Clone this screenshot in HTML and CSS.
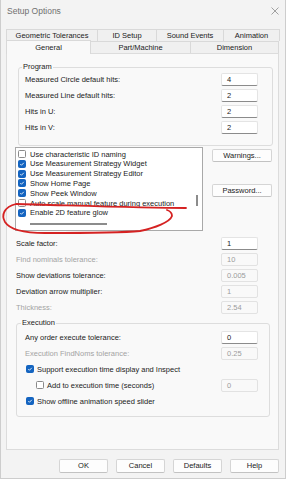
FILE: index.html
```html
<!DOCTYPE html>
<html lang="en">
<head>
    <meta charset="UTF-8">
    <meta name="viewport" content="width=device-width, initial-scale=1.0">
    <title>Setup Options</title>
    <link rel="stylesheet" href="styles.css">
</head>
<body>

<div class="window">
    <div class="titlebar">
        <span class="title">Setup Options</span>
        <svg class="close" width="8" height="8" viewBox="0 0 8 8"><path d="M0.5 0.5L7.5 7.5M7.5 0.5L0.5 7.5"/></svg>
    </div>

    <div class="tabs">
        <div class="tab-row">
            <div class="tab t-geo">Geometric Tolerances</div>
            <div class="tab t-id">ID Setup</div>
            <div class="tab t-sound">Sound Events</div>
            <div class="tab t-anim">Animation</div>
        </div>
        <div class="tab-row">
            <div class="tab t-general active">General</div>
            <div class="tab t-part">Part/Machine</div>
            <div class="tab t-dim">Dimension</div>
        </div>
    </div>

    <div class="panel">
        <fieldset class="group program">
            <legend>Program</legend>
            <div class="row"><span class="label">Measured Circle default hits:</span><span class="input">4</span></div>
            <div class="row"><span class="label">Measured Line default hits:</span><span class="input">2</span></div>
            <div class="row"><span class="label">Hits in U:</span><span class="input">2</span></div>
            <div class="row"><span class="label">Hits in V:</span><span class="input">2</span></div>
        </fieldset>

        <div class="options">
            <div class="listbox">
                <div class="item"><span class="check"></span>Use characteristic ID naming</div>
                <div class="item"><span class="check on"><svg viewBox="0 0 8 8"><path d="M1.7 4.1L3.3 5.7L6.4 2.4"/></svg></span>Use Measurement Strategy Widget</div>
                <div class="item"><span class="check on"><svg viewBox="0 0 8 8"><path d="M1.7 4.1L3.3 5.7L6.4 2.4"/></svg></span>Use Measurement Strategy Editor</div>
                <div class="item"><span class="check on"><svg viewBox="0 0 8 8"><path d="M1.7 4.1L3.3 5.7L6.4 2.4"/></svg></span>Show Home Page</div>
                <div class="item"><span class="check on"><svg viewBox="0 0 8 8"><path d="M1.7 4.1L3.3 5.7L6.4 2.4"/></svg></span>Show Peek Window</div>
                <div class="item"><span class="check"></span>Auto scale manual feature during execution</div>
                <div class="item"><span class="check on"><svg viewBox="0 0 8 8"><path d="M1.7 4.1L3.3 5.7L6.4 2.4"/></svg></span>Enable 2D feature glow</div>
                <div class="hthumb"></div>
                <div class="vthumb"></div>
            </div>
            <div class="side-buttons">
                <div class="button">Warnings...</div>
                <div class="button">Password...</div>
            </div>
            <!-- red hand-drawn markup over the list -->
            <svg class="markup" width="200" height="40" viewBox="0 200 200 40">
                <path d="M186 209C140 209 60 206 16 205C4 208 1 216 5 223C10 231 25 234 45 234C80 234 120 234 140 232C155 229 170 223 172 217C172 214 170 212 167 211"/>
            </svg>
        </div>

        <div class="fields">
            <div class="row"><span class="label">Scale factor:</span><span class="input">1</span></div>
            <div class="row"><span class="label disabled">Find nominals tolerance:</span><span class="input disabled">10</span></div>
            <div class="row"><span class="label">Show deviations tolerance:</span><span class="input disabled">0.005</span></div>
            <div class="row"><span class="label">Deviation arrow multiplier:</span><span class="input disabled">1</span></div>
            <div class="row"><span class="label disabled">Thickness:</span><span class="input disabled">2.54</span></div>
        </div>

        <fieldset class="group execution">
            <legend>Execution</legend>
            <div class="row"><span class="label">Any order execute tolerance:</span><span class="input">0</span></div>
            <div class="row"><span class="label disabled">Execution FindNoms tolerance:</span><span class="input disabled">0.25</span></div>
            <div class="row"><span class="check on"><svg viewBox="0 0 8 8"><path d="M1.7 4.1L3.3 5.7L6.4 2.4"/></svg></span><span class="label">Support execution time display and Inspect</span></div>
            <div class="row indent"><span class="check"></span><span class="label">Add to execution time (seconds)</span><span class="input disabled">0</span></div>
            <div class="row"><span class="check on"><svg viewBox="0 0 8 8"><path d="M1.7 4.1L3.3 5.7L6.4 2.4"/></svg></span><span class="label">Show offline animation speed slider</span></div>
        </fieldset>
    </div>

    <div class="footer">
        <div class="button">OK</div>
        <div class="button">Cancel</div>
        <div class="button">Defaults</div>
        <div class="button">Help</div>
    </div>
</div>

</body>
</html>
```

FILE: styles.css
```css
* {
    box-sizing: border-box;
}
body {
    margin: 0;
    font-family: "Liberation Sans", Arial, sans-serif;
    font-size: 7.5px;
    color: #1b1b1b;
    background-color: #ffffff;
}
.window {
    width: 286px;
    height: 479px;
    background-color: #f3f3f3;
    border: 1px solid #cdcdcd;
    border-top: none;
    display: flex;
    flex-direction: column;
}

/* title bar */
.titlebar {
    height: 28px;
    flex: none;
    display: flex;
    justify-content: space-between;
    align-items: flex-start;
    padding: 5px 6px 0 6px;
}
.title {
    font-size: 8.5px;
    line-height: 12px;
    color: #707070;
}
.close {
    margin-top: 2px;
}
.close path {
    stroke: #8a8a8a;
    stroke-width: 0.8;
    fill: none;
}

/* tabs */
.tabs {
    height: 25px;
    flex: none;
    padding: 1px 6px 0 5px;
}
.tab-row {
    display: flex;
    height: 12px;
}
.tab {
    border: 1px solid #d9d9d9;
    border-bottom: none;
    margin-right: -1px;
    background-color: #f0f0f0;
    text-align: center;
    line-height: 11px;
    white-space: nowrap;
}
.t-geo { width: 92px; }
.t-id { width: 60px; }
.t-sound { width: 68px; }
.t-anim { width: 57px; }
.t-general { width: 85px; }
.t-part { width: 101px; }
.t-dim { width: 89px; }
.tab.active {
    background-color: #f9f9f9;
    height: 14px;
    margin-top: -1px;
    line-height: 13px;
    position: relative;
    z-index: 1;
}

/* page body */
.panel {
    height: 397px;
    flex: none;
    margin: 0 6px 0 5px;
    background-color: #f9f9f9;
    border: 1px solid #dcdcdc;
}
.group {
    margin: 0;
    border: 1px solid #dddddd;
    border-radius: 3px;
    min-width: 0;
}
.group legend {
    line-height: 10px;
    padding: 0 1px;
}
.program {
    margin: 8px 5px 0 11px;
    padding: 0 14px 10px 6px;
}
.program legend {
    margin-left: -3px;
}
.row {
    display: flex;
    align-items: center;
    height: 15.8px;
}
.label {
    flex: 1;
    white-space: nowrap;
}
.disabled {
    color: #a3a3a3;
}
.input {
    width: 37px;
    height: 13px;
    flex: none;
    background-color: #ffffff;
    border: 1px solid #e4e4e4;
    border-bottom-color: #8b8b8b;
    border-radius: 2px;
    padding-left: 5px;
    line-height: 11px;
}
.input.disabled {
    background-color: #f9f9f9;
    border-color: #e2e2e2;
    color: #9c9c9c;
}

/* options list */
.options {
    display: flex;
    margin: 1px 0 0 8px;
    position: relative;
}
.listbox {
    width: 188px;
    height: 84px;
    background-color: #ffffff;
    border: 1px solid #a9a9a9;
    padding: 1px 0 0 2px;
    position: relative;
}
.item {
    display: flex;
    align-items: center;
    height: 9.8px;
    white-space: nowrap;
}
.check {
    width: 8px;
    height: 8px;
    flex: none;
    border: 1px solid #8a8a8a;
    border-radius: 1.5px;
    background-color: #ffffff;
    margin-right: 4px;
}
.check.on {
    background-color: #1464c0;
    border-color: #1464c0;
}
.check svg {
    display: block;
    width: 6px;
    height: 6px;
}
.check path {
    fill: none;
    stroke: #ffffff;
    stroke-width: 1.1;
}
.hthumb {
    width: 77px;
    height: 1.5px;
    margin: 5.5px 0 0 12px;
    background-color: #8c8c8c;
}
.vthumb {
    position: absolute;
    left: 180px;
    top: 47px;
    width: 1.5px;
    height: 11px;
    background-color: #8c8c8c;
}
.side-buttons {
    margin: 2px 0 0 9px;
    display: flex;
    flex-direction: column;
    gap: 22px;
}
.side-buttons .button {
    width: 60px;
}
.button {
    height: 13px;
    background-color: #fdfdfd;
    border: 1px solid #d5d5d5;
    border-bottom-color: #c2c2c2;
    border-radius: 2px;
    text-align: center;
    line-height: 11px;
}
.markup {
    position: absolute;
    left: -15px;
    top: 52px;
    overflow: visible;
}
.markup path {
    fill: none;
    stroke: #d52222;
    stroke-width: 1.8;
    stroke-linecap: round;
}

/* lower fields */
.fields {
    margin: 4px 20px 0 9px;
}
.fields .row {
    height: 16px;
}
.execution {
    margin: 3px 8px 0 9px;
    padding: 1px 11px 7px 8px;
}
.execution legend {
    margin-left: -4px;
}
.execution .row {
    height: 16px;
}
.execution .check {
    margin-left: 1px;
    margin-right: 3px;
}
.execution .indent .check {
    margin-left: 11px;
}

/* dialog buttons */
.footer {
    flex: 1;
    display: flex;
    justify-content: flex-end;
    gap: 8px;
    padding: 9px 6px 0 0;
}
.footer .button {
    width: 49px;
    height: 14px;
    line-height: 12px;
}
```
